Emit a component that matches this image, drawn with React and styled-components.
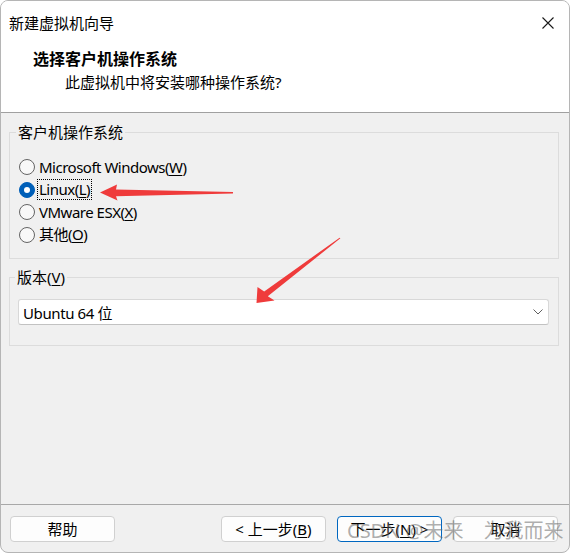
import React from 'react';
import styled, { createGlobalStyle } from 'styled-components';

const GlobalStyle = createGlobalStyle`
  html, body {
    margin: 0;
    padding: 0;
    background: #ffffff;
  }
  body {
    font-family: "Noto Sans", "Noto Sans CJK SC", sans-serif;
    font-size: 15px;
    color: #000;
  }
`;

const Screen = styled.div`
  position: relative;
  width: 572px;
  height: 553px;
`;

const Window = styled.div`
  box-sizing: border-box;
  width: 570px;
  height: 553px;
  border: 1px solid #b5b5b5;
  border-radius: 8px;
  overflow: hidden;
  background: #f0f0f0;
  display: flex;
  flex-direction: column;
`;

const Header = styled.div`
  background: #ffffff;
  border-bottom: 1px solid #a0a0a0;
  padding-bottom: 20px;
`;

const TitleBar = styled.div`
  height: 44px;
  display: flex;
  align-items: center;
  justify-content: space-between;
  padding: 0 15px 0 8px;
  line-height: 20px;
`;

const CloseButton = styled.div`
  width: 12px;
  height: 12px;
  display: flex;
`;

const Heading = styled.div`
  padding: 4px 0 0 32px;
  font-weight: bold;
  font-size: 16px;
  line-height: 20px;
`;

const Subtitle = styled.div`
  margin-top: 3px;
  padding-left: 64px;
  line-height: 20px;
`;

const Body = styled.div`
  flex: 1;
  padding: 9px 10px 0 8px;
  display: flex;
  flex-direction: column;
  gap: 8px;
`;

const Group = styled.fieldset`
  margin: 0;
  min-width: 0;
  border: 1px solid #dcdcdc;
  padding: ${p => p.$pad};
`;

const Legend = styled.legend`
  padding: 0 2px;
  margin-left: -3px;
  line-height: 20px;
`;

const RadioRow = styled.label`
  display: flex;
  align-items: center;
  height: 22.5px;
  gap: 2px;
`;

const RadioDot = styled.span`
  box-sizing: border-box;
  width: 16px;
  height: 16px;
  border-radius: 50%;
  display: flex;
  align-items: center;
  justify-content: center;
  background: ${p => (p.$checked ? '#005fb8' : '#f8f8f8')};
  border: 1px solid ${p => (p.$checked ? '#005fb8' : '#646464')};

  &::after {
    content: '';
    display: ${p => (p.$checked ? 'block' : 'none')};
    width: 6px;
    height: 6px;
    border-radius: 50%;
    background: #ffffff;
  }
`;

const RadioText = styled.span`
  padding: 0 1px;
  line-height: 19px;
  letter-spacing: -0.5px;
  border: 1px dotted ${p => (p.$focused ? '#000' : 'transparent')};
`;

const Key = styled.span`
  text-decoration: underline;
  text-underline-offset: 2px;
`;

const Select = styled.div`
  box-sizing: border-box;
  height: 26px;
  background: #ffffff;
  border: 1px solid #d8d8d8;
  border-bottom-color: #c2c2c2;
  border-radius: 3px;
  display: flex;
  align-items: center;
  justify-content: space-between;
  padding: 0 5px 0 4px;
  letter-spacing: -0.4px;
`;

const Footer = styled.div`
  border-top: 1px solid #a8a8a8;
  padding: 11px 11px 10px 9px;
  display: flex;
  align-items: center;
  gap: 11px;
`;

const Spacer = styled.div`
  flex: 1;
`;

const Button = styled.button`
  box-sizing: border-box;
  width: 105px;
  height: 26px;
  padding: 0;
  background: #fdfdfd;
  border: 1px solid ${p => (p.$primary ? '#0067c0' : '#d0d0d0')};
  border-radius: 4px;
  font-family: inherit;
  font-size: 15px;
  line-height: 20px;
  color: #000;
`;

const Marks = styled.svg`
  position: absolute;
  left: 0;
  top: 0;
  pointer-events: none;
`;

const Watermark = styled.div`
  position: absolute;
  left: 347px;
  top: 518px;
  font-size: 20px;
  line-height: 26px;
  white-space: pre;
  color: rgba(105, 105, 105, 0.55);
  pointer-events: none;
`;

const systems = [
  { label: 'Microsoft Windows', key: 'W' },
  { label: 'Linux', key: 'L', checked: true },
  { label: 'VMware ESX', key: 'X' },
  { label: '其他', key: 'O' },
];

const App = () => (
  <Screen>
    <GlobalStyle />
    <Window>
      <Header>
        <TitleBar>
          <span>新建虚拟机向导</span>
          <CloseButton>
            <svg width="12" height="12" viewBox="0 0 12 12">
              <path d="M0.5 0.5 L11.5 11.5 M11.5 0.5 L0.5 11.5" stroke="#1a1a1a" strokeWidth="1.1" />
            </svg>
          </CloseButton>
        </TitleBar>
        <Heading>选择客户机操作系统</Heading>
        <Subtitle>此虚拟机中将安装哪种操作系统?</Subtitle>
      </Header>

      <Body>
        <Group $pad="14px 9px 12px 9px">
          <Legend>客户机操作系统</Legend>
          {systems.map(s => (
            <RadioRow key={s.key}>
              <RadioDot $checked={s.checked} />
              <RadioText $focused={s.checked}>
                {s.label}(<Key>{s.key}</Key>)
              </RadioText>
            </RadioRow>
          ))}
        </Group>

        <Group $pad="12px 9px 20px 8px">
          <Legend>版本(<Key>V</Key>)</Legend>
          <Select>
            <span>Ubuntu 64 位</span>
            <svg width="10" height="6" viewBox="0 0 10 6">
              <path d="M0.5 0.5 L5 5 L9.5 0.5" fill="none" stroke="#606060" strokeWidth="1" />
            </svg>
          </Select>
        </Group>
      </Body>

      <Footer>
        <Button>帮助</Button>
        <Spacer />
        <Button>&lt; 上一步(<Key>B</Key>)</Button>
        <Button $primary>下一步(<Key>N</Key>) &gt;</Button>
        <Button>取消</Button>
      </Footer>
    </Window>

    <Marks width="572" height="553" viewBox="0 0 572 553">
      <polygon
        fill="#ef3b3b"
        points="100,192.5 117,184.5 116,189.5 233,192 233,193.6 116,196.2 117.5,200.5"
      />
      <polygon
        fill="#ef3b3b"
        points="256.5,303 257.5,287 264.2,291.4 339.6,237.7 340.4,238.3 267.8,296.2 274.5,300.5"
      />
    </Marks>
    <Watermark>CSDN @未来　为我而来</Watermark>
  </Screen>
);

export default App;
